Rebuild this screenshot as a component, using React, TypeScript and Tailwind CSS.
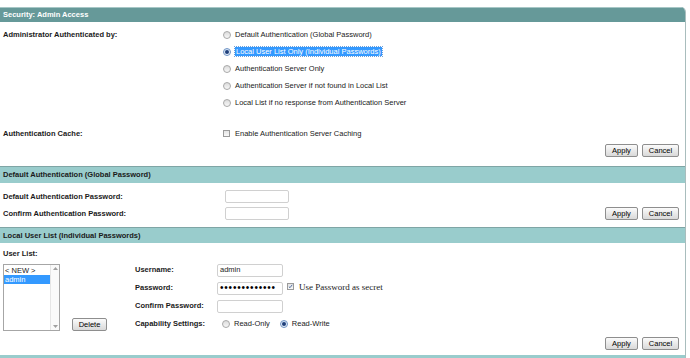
import React from "react";

const Radio = ({ checked }: { checked?: boolean }) =>
  checked ? (
    <span className="inline-flex w-[8px] h-[8px] shrink-0 items-center justify-center rounded-full border border-[#6f93c4] bg-linear-to-b from-[#cfe0f5] to-[#eef4fb]">
      <span className="w-[4px] h-[4px] rounded-full bg-[#1f3f7a]" />
    </span>
  ) : (
    <span className="inline-block w-[8px] h-[8px] shrink-0 rounded-full border border-[#a8a8a8] bg-linear-to-b from-[#dcdcdc] to-[#f7f7f7]" />
  );

const Checkbox = ({ checked }: { checked?: boolean }) => (
  <span className="inline-flex w-[7px] h-[7px] shrink-0 items-center justify-center border border-[#9a9a9a] bg-linear-to-b from-[#e4e4e4] to-[#f8f8f8]">
    {checked && (
      <svg width="7" height="7" viewBox="0 0 7 7">
        <path d="M1.2 3.6 L2.8 5.2 L5.8 1.2" stroke="#2b4f8f" strokeWidth="1.1" fill="none" />
      </svg>
    )}
  </span>
);

const Btn = ({ children, w }: { children: React.ReactNode; w: string }) => (
  <button
    className={`${w} h-[13px] flex items-center justify-center border border-[#8e8e8e] rounded-[2px] bg-linear-to-b from-[#fbfbfb] to-[#d9d9d9] text-[7.5px] leading-none text-black`}
  >
    {children}
  </button>
);

const Box = ({ children, w }: { children?: React.ReactNode; w: string }) => (
  <div
    className={`${w} h-[13px] flex items-center px-[2px] border border-[#d0d0d0] rounded-[2px] bg-white text-[7.5px] leading-none overflow-hidden`}
  >
    {children}
  </div>
);

const ApplyCancel = () => (
  <div className="flex gap-[4px]">
    <Btn w="w-[33px]">Apply</Btn>
    <Btn w="w-[37px]">Cancel</Btn>
  </div>
);

export default function App() {
  const options = [
    "Default Authentication (Global Password)",
    "Local User List Only (Individual Passwords)",
    "Authentication Server Only",
    "Authentication Server if not found in Local List",
    "Local List if no response from Authentication Server",
  ];
  return (
    <div className="w-[690px] h-[358px] bg-white pt-[7px] overflow-hidden font-['Liberation_Sans',Arial,sans-serif] text-[7.5px] text-[#1a1a1a]">
      <div className="w-[686px] h-[351px] flex flex-col border-r border-[#a9bdbd] rounded-tr-[5px] overflow-hidden">
        {/* Section 1 header */}
        <div className="h-[15px] shrink-0 bg-[#669999] border-t border-[#a7c7c6] flex items-center pl-[3px] font-bold text-white">
          Security: Admin Access
        </div>
        {/* Section 1 body */}
        <div className="h-[144px] shrink-0 flex flex-col pt-[4px]">
          <div className="flex">
            <div className="w-[223px] pl-[3px] h-[17px] flex items-center font-bold">
              Administrator Authenticated by:
            </div>
            <div className="flex flex-col">
              {options.map((o, i) => (
                <div key={o} className="h-[17px] flex items-center gap-[4px]">
                  <Radio checked={i === 1} />
                  {i === 1 ? (
                    <span className="bg-[#3399ff] text-white px-[1px] leading-[9px] outline outline-dotted outline-[#6f9fd8]">
                      {o}
                    </span>
                  ) : (
                    <span>{o}</span>
                  )}
                </div>
              ))}
            </div>
          </div>
          <div className="flex mt-[14px] h-[17px]">
            <div className="w-[223px] pl-[3px] flex items-center font-bold">Authentication Cache:</div>
            <div className="flex items-center gap-[5px]">
              <Checkbox />
              <span>Enable Authentication Server Caching</span>
            </div>
          </div>
          <div className="flex justify-end pr-[6px] mt-[2px]">
            <ApplyCancel />
          </div>
        </div>
        {/* Section 2 header */}
        <div className="h-[17px] shrink-0 bg-[#99cccc] border-t border-[#7fa5a5] flex items-center pl-[3px] font-bold">
          Default Authentication (Global Password)
        </div>
        <div className="h-[44px] shrink-0 flex flex-col pt-[5px]">
          <div className="h-[17px] flex items-center">
            <div className="w-[225px] pl-[3px] font-bold">Default Authentication Password:</div>
            <Box w="w-[64px]" />
          </div>
          <div className="h-[17px] flex items-center">
            <div className="w-[225px] pl-[3px] font-bold">Confirm Authentication Password:</div>
            <Box w="w-[64px]" />
            <div className="ml-auto pr-[6px]">
              <ApplyCancel />
            </div>
          </div>
        </div>
        {/* Section 3 header */}
        <div className="h-[16px] shrink-0 bg-[#99cccc] border-t border-[#7fa5a5] flex items-center pl-[3px] font-bold">
          Local User List (Individual Passwords)
        </div>
        <div className="h-[112px] shrink-0 flex flex-col pt-[6px]">
          <div className="h-[10px] pl-[3px] flex items-center font-bold">User List:</div>
          <div className="flex mt-[2px]">
            <div className="ml-[3px] mt-[3px] w-[57px] h-[67px] border border-[#a6a6a6] flex bg-white">
              <div className="flex-1 flex flex-col pt-[1px]">
                <div className="h-[9px] pl-[1px] flex items-center leading-none">&lt; NEW &gt;</div>
                <div className="h-[9px] pl-[1px] flex items-center leading-none bg-[#3399ff] text-white">admin</div>
              </div>
              <div className="w-[9px] border-l border-[#e6e6e6] bg-[#fafafa] flex flex-col justify-between items-center py-[2px]">
                <svg width="5" height="3" viewBox="0 0 5 3">
                  <path d="M0 3 L2.5 0 L5 3 Z" fill="#a0a0a0" />
                </svg>
                <svg width="5" height="3" viewBox="0 0 5 3">
                  <path d="M0 0 L2.5 3 L5 0 Z" fill="#a0a0a0" />
                </svg>
              </div>
            </div>
            <div className="ml-[12px] flex items-end pb-[2px]">
              <Btn w="w-[35px]">Delete</Btn>
            </div>
            <div className="ml-[28px] flex flex-col">
              <div className="h-[18px] flex items-center">
                <div className="w-[82px] font-bold">Username:</div>
                <Box w="w-[66px]">admin</Box>
              </div>
              <div className="h-[18px] flex items-center">
                <div className="w-[82px] font-bold">Password:</div>
                <Box w="w-[66px]">
                  <span className="text-[10px] tracking-[0.8px] leading-none text-black">•••••••••••••</span>
                </Box>
                <span className="ml-[4px]">
                  <Checkbox checked />
                </span>
                <span className="ml-[5px] font-['Liberation_Serif',serif] text-[9px]">Use Password as secret</span>
              </div>
              <div className="h-[18px] flex items-center">
                <div className="w-[82px] font-bold">Confirm Password:</div>
                <Box w="w-[66px]" />
              </div>
              <div className="h-[18px] flex items-center">
                <div className="w-[82px] font-bold">Capability Settings:</div>
                <div className="ml-[5px] flex items-center gap-[4px]">
                  <Radio />
                  <span>Read-Only</span>
                </div>
                <div className="ml-[10px] flex items-center gap-[4px]">
                  <Radio checked />
                  <span>Read-Write</span>
                </div>
              </div>
            </div>
          </div>
          <div className="flex justify-end pr-[6px] mt-[4px]">
            <ApplyCancel />
          </div>
        </div>
        <div className="flex-1 bg-[#99cccc]" />
      </div>
    </div>
  );
}
